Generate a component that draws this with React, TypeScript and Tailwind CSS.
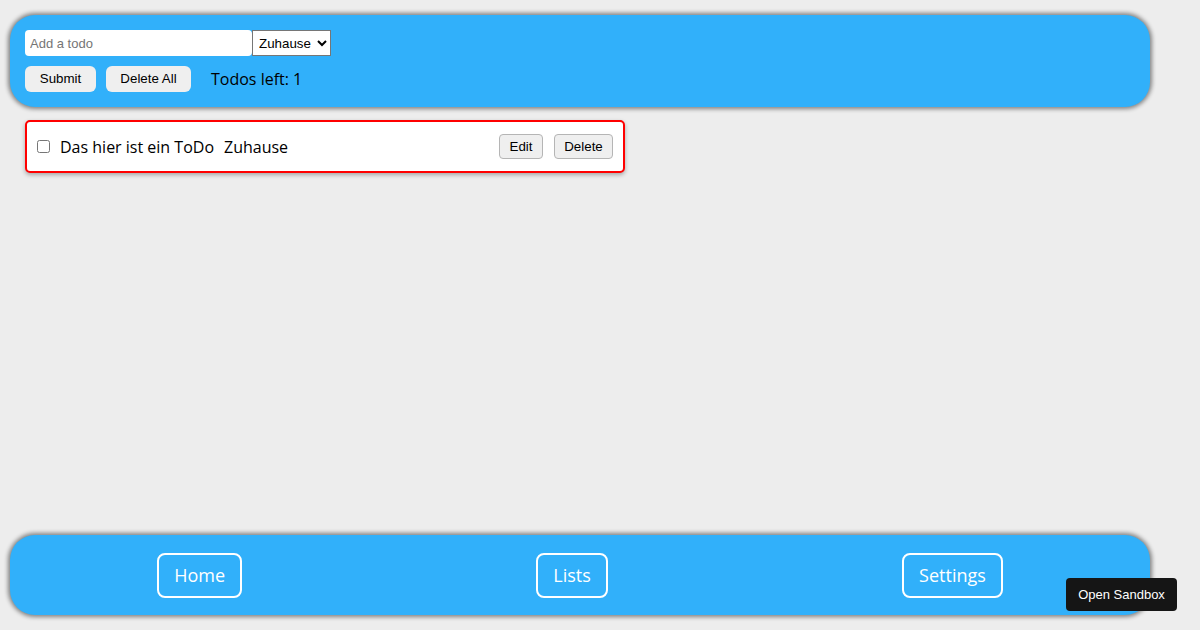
import React, { useState } from 'react';

const btn =
  'h-[26px] whitespace-nowrap rounded-[6px] bg-[#efefef] text-[13.33px] text-black font-["Liberation_Sans",Arial,sans-serif]';

export default function App() {
  const [text, setText] = useState('');
  const [done, setDone] = useState(false);

  return (
    <div className="relative flex h-[630px] w-[1200px] flex-col bg-[#ededed] font-['Open_Sans',sans-serif]">
      {/* Header */}
      <div className="mx-[10px] mt-[15px] h-[92px] w-[1140px] rounded-[25px] bg-[#31b0fa] px-[15px] pt-[15px] shadow-[0_0_4px_2px_rgba(0,0,0,0.45)]">
        <div className="flex h-[26px]">
          <input
            value={text}
            onChange={(e) => setText(e.target.value)}
            placeholder="Add a todo"
            className="h-[26px] w-[227px] rounded-[4px] bg-white px-[5px] text-[13px] font-['Liberation_Sans',Arial,sans-serif] placeholder:text-[#757575] outline-none"
          />
          <select className="h-[26px] w-[79px] border border-[#767676] bg-white px-[2px] text-[13.33px] text-black font-['Liberation_Sans',Arial,sans-serif]">
            <option>Zuhause</option>
          </select>
        </div>
        <div className="mt-[10px] flex items-center">
          <button className={`${btn} w-[71px]`}>Submit</button>
          <button className={`${btn} ml-[10px] w-[85px]`}>Delete All</button>
          <span className="ml-[20px] text-[16px] text-black">Todos left: 1</span>
        </div>
      </div>

      {/* Todo list */}
      <div className="ml-[25px] mt-[13px] flex h-[53px] w-[600px] items-center rounded-[5px] border-2 border-[#ff0000] bg-white pl-[10px] pr-[10px] shadow-[0_2px_4px_rgba(0,0,0,0.3)]">
        <input
          type="checkbox"
          checked={done}
          onChange={() => setDone(!done)}
          className="h-[13px] w-[13px]"
        />
        <span className="ml-[10px] text-[16px] text-black">Das hier ist ein ToDo</span>
        <span className="ml-[10px] text-[16px] text-black">Zuhause</span>
        <div className="ml-auto flex gap-[11px]">
          <button className="h-[25px] w-[44px] rounded-[4px] border border-[#b5b5b5] bg-[#efefef] text-[13.33px] font-['Liberation_Sans',Arial,sans-serif]">
            Edit
          </button>
          <button className="h-[25px] w-[59px] rounded-[4px] border border-[#b5b5b5] bg-[#efefef] text-[13.33px] font-['Liberation_Sans',Arial,sans-serif]">
            Delete
          </button>
        </div>
      </div>

      {/* Footer nav */}
      <div className="mx-[10px] mt-auto mb-[15px] flex h-[80px] w-[1140px] items-center justify-around rounded-[25px] bg-[#31b0fa] shadow-[0_0_4px_2px_rgba(0,0,0,0.45)]">
        {['Home', 'Lists', 'Settings'].map((label) => (
          <button
            key={label}
            className="h-[45px] rounded-[8px] border-2 border-white px-[15px] text-[18px] text-white"
          >
            {label}
          </button>
        ))}
      </div>

      <button className="absolute left-[1066px] top-[578px] h-[33px] w-[111px] rounded-[4px] bg-[#151515] text-[13px] text-white font-['Liberation_Sans',Arial,sans-serif]">
        Open Sandbox
      </button>
    </div>
  );
}
